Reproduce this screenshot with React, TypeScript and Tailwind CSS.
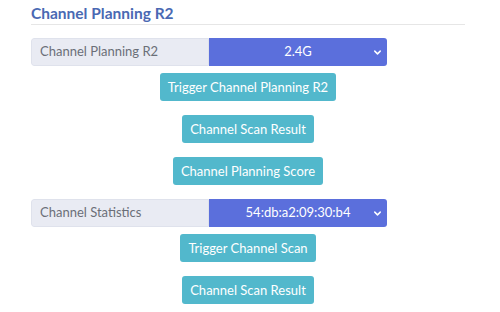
import { ChevronDown } from "lucide-react"

function InputGroup({ label, value }: { label: string; value: string }) {
  return (
    <div className="flex w-[356px] h-[28px] rounded-[3px] overflow-hidden">
      <div className="w-[178px] flex items-center pl-[8px] bg-[#e9ebf3] border border-[#dfe2ec] rounded-l-[3px] text-[13px] text-[#6b6f78]">
        {label}
      </div>
      <div className="flex-1 relative flex items-center justify-center bg-[#5b6fdc] text-white text-[13px]">
        <span>{value}</span>
        <ChevronDown className="absolute right-[4px] w-[11px] h-[11px]" strokeWidth={3.2} />
      </div>
    </div>
  )
}

function Btn({ children }: { children: string }) {
  return (
    <button className="h-[28px] px-[8px] rounded-[3px] bg-[#52b8cc] text-white text-[13px] leading-none">
      {children}
    </button>
  )
}

export default function App() {
  return (
    <div className="w-[500px] h-[312px] bg-white" style={{ fontFamily: "Lato, 'Open Sans', sans-serif" }}>
      <div className="ml-[31px] w-[434px] pt-[3px]">
        <h2 className="text-[15.5px] font-bold text-[#4a69b3] leading-[20px] pb-[1px] border-b border-[#e6e6e6]">
          Channel Planning R2
        </h2>
        <div className="mt-[13px] flex flex-col items-center">
          <div className="self-start">
            <InputGroup label="Channel Planning R2" value="2.4G" />
          </div>
          <div className="mt-[7px]"><Btn>Trigger Channel Planning R2</Btn></div>
          <div className="mt-[14px]"><Btn>Channel Scan Result</Btn></div>
          <div className="mt-[14px]"><Btn>Channel Planning Score</Btn></div>
          <div className="self-start mt-[14px]">
            <InputGroup label="Channel Statistics" value="54:db:a2:09:30:b4" />
          </div>
          <div className="mt-[7px]"><Btn>Trigger Channel Scan</Btn></div>
          <div className="mt-[14px]"><Btn>Channel Scan Result</Btn></div>
        </div>
      </div>
    </div>
  )
}
